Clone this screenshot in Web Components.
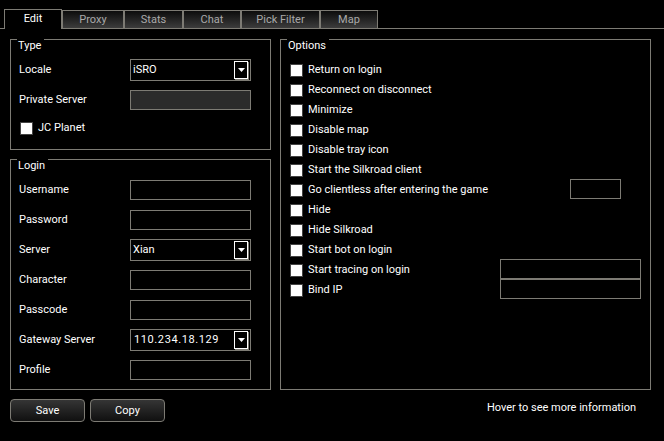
<!DOCTYPE html>
<html><head><meta charset="utf-8"><title>Edit</title>
<style>
html,body{margin:0;background:#000;height:100%}
body{font:11px/14px Roboto,"Noto Sans",sans-serif;color:#fff;overflow:hidden}
</style></head><body>
<app-window></app-window>
<script>
const line='#7d7b74';
function def(name,css,html,init){
  customElements.define(name,class extends HTMLElement{
    constructor(){super();const r=this.attachShadow({mode:'open'});r.innerHTML='<style>'+css+'</style>'+html;}
    connectedCallback(){if(init)init.call(this,this.shadowRoot);}
  });
}
def('tab-strip',`:host{display:flex;height:19px;padding:9px 0 0 4px;border-bottom:1px solid ${line}}`,'<slot></slot>');
def('tab-item',`:host{display:block;box-sizing:border-box;height:18px;margin-top:1px;border:1px solid ${line};border-bottom:0;background:linear-gradient(#0c0c0c,#3c3c3c);color:#a9a9a9;text-align:center;line-height:17px}
:host([active]){height:20px;margin-top:0;margin-bottom:-1px;background:#000;color:#fff;position:relative}`,'<slot></slot>');
def('group-box',`:host{display:block;position:relative;box-sizing:border-box;border:1px solid ${line};padding:15px 8px 0}
.t{position:absolute;top:-1px;left:6px;background:#000;padding:0 3px 0 1px;line-height:14px}`,'<div class="t"></div><slot></slot>',function(r){r.querySelector('.t').textContent=this.getAttribute('label')});
def('form-row',`:host{display:grid;grid-template-columns:111px 121px;height:30px;align-items:center}`,'<span></span><slot></slot>',function(r){r.querySelector('span').textContent=this.getAttribute('label')});
def('text-box',`:host{display:block;box-sizing:border-box;height:20px;border:1px solid ${line};background:#000}
:host([disabled]){background:#2b2b2b}`,'');
def('combo-box',`:host{display:flex;align-items:center;box-sizing:border-box;height:22px;border:1px solid ${line};padding:0 1px 0 2px;background:#000}
.v{flex:1;letter-spacing:var(--ls,0);padding-left:var(--pl,0)}
.b{box-sizing:border-box;width:14px;height:18px;border:1px solid #fff;background:#000;box-shadow:1px 1px 0 ${line};display:flex;align-items:center;justify-content:center;margin-right:1px}
svg{display:block}`,'<span class="v"><slot></slot></span><span class="b"><svg width="7" height="4" viewBox="0 0 7 4"><path d="M0 0h7L3.5 4z" fill="#fff"/></svg></span>');
def('check-row',`:host{display:flex;align-items:center;height:20px}
i{display:block;box-sizing:border-box;width:13px;height:13px;background:#fff;border:1px solid #444;margin-right:5px;flex:none}`,'<i></i><slot></slot>');
def('push-button',`:host{display:block;box-sizing:border-box;width:75px;height:23px;border:1px solid ${line};border-radius:4px;background:linear-gradient(#353535,#101010);text-align:center;line-height:21px}`,'<slot></slot>');
def('app-window',`:host{display:block;width:664px;height:441px}
.main{display:grid;grid-template-columns:261px 371px;column-gap:9px;padding:10px 0 0 10px}
.left{display:flex;flex-direction:column;gap:9px}
.type{height:111px}
.login{height:231px}
.options{height:351px;padding-left:9px;padding-top:20px}
.jc{height:26px;padding-left:1px}
.foot{display:flex;gap:5px;padding:9px 28px 0 10px;align-items:flex-start}
.hint{margin-left:auto;margin-top:2px}
.opt{display:flex;justify-content:space-between;height:20px}
.c{width:51px;margin:-1px 21px 0 0}.w{width:141px;margin:-1px 1px 0 0}`,`
<tab-strip>
<tab-item active style="width:58px">Edit</tab-item><tab-item style="width:62px">Proxy</tab-item><tab-item style="width:59px">Stats</tab-item><tab-item style="width:58px">Chat</tab-item><tab-item style="width:79px">Pick Filter</tab-item><tab-item style="width:58px">Map</tab-item>
</tab-strip>
<div class="main">
<div class="left">
<group-box class="type" label="Type">
<form-row label="Locale"><combo-box>iSRO</combo-box></form-row>
<form-row label="Private Server"><text-box disabled></text-box></form-row>
<check-row class="jc">JC Planet</check-row>
</group-box>
<group-box class="login" label="Login">
<form-row label="Username"><text-box></text-box></form-row>
<form-row label="Password"><text-box></text-box></form-row>
<form-row label="Server"><combo-box>Xian</combo-box></form-row>
<form-row label="Character"><text-box></text-box></form-row>
<form-row label="Passcode"><text-box></text-box></form-row>
<form-row label="Gateway Server"><combo-box style="--ls:.6px;--pl:1px">110.234.18.129</combo-box></form-row>
<form-row label="Profile"><text-box></text-box></form-row>
</group-box>
</div>
<group-box class="options" label="Options">
<check-row>Return on login</check-row>
<check-row>Reconnect on disconnect</check-row>
<check-row>Minimize</check-row>
<check-row>Disable map</check-row>
<check-row>Disable tray icon</check-row>
<check-row>Start the Silkroad client</check-row>
<div class="opt"><check-row>Go clientless after entering the game</check-row><text-box class="c"></text-box></div>
<check-row>Hide</check-row>
<check-row>Hide Silkroad</check-row>
<check-row>Start bot on login</check-row>
<div class="opt"><check-row>Start tracing on login</check-row><text-box class="w"></text-box></div>
<div class="opt"><check-row>Bind IP</check-row><text-box class="w"></text-box></div>
</group-box>
</div>
<div class="foot"><push-button>Save</push-button><push-button>Copy</push-button><span class="hint">Hover to see more information</span></div>
`);
</script>
</body></html>
